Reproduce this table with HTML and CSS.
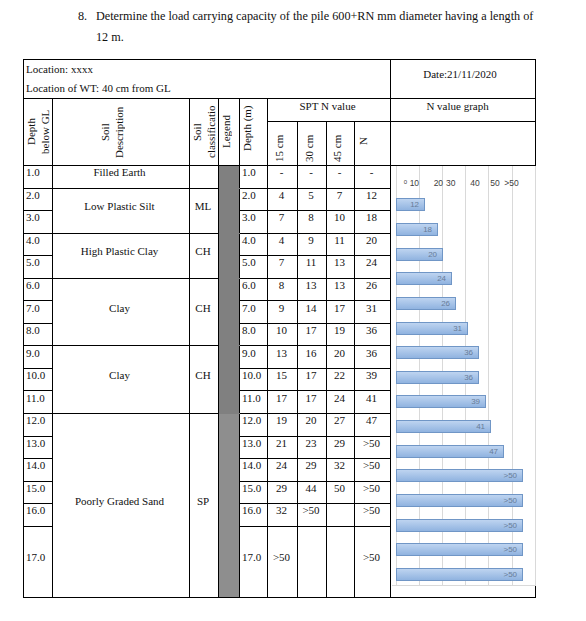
FILE: index.html
```html
<!DOCTYPE html>
<html lang="en">
<head>
    <meta charset="UTF-8">
    <meta name="viewport" content="width=device-width, initial-scale=1.0">
    <title>Pile load capacity - bore log</title>
    <link rel="stylesheet" href="styles.css">
</head>
<body>
    <div class="sheet">
        <div class="question">
            <span class="qnum">8.</span>
            <p>Determine the load carrying capacity of the pile 600+RN mm diameter having a length of 12 m.</p>
        </div>

        <table class="log">
            <colgroup>
                <col class="c-depth">
                <col class="c-desc">
                <col class="c-class">
                <col class="c-legend">
                <col class="c-depthm">
                <col class="c-15">
                <col class="c-30">
                <col class="c-45">
                <col class="c-n">
                <col class="c-graph">
            </colgroup>
            <tr class="row-loc">
                <td colspan="9" class="location">Location: xxxx<br>Location of WT: 40 cm from GL</td>
                <td class="date">Date:21/11/2020</td>
            </tr>
            <tr class="row-head1">
                <th rowspan="2" class="v v-depth"><div class="vert tall">Depth<br>below GL</div></th>
                <th rowspan="2" class="v v-desc"><div class="vert tall">Soil<br>Description</div></th>
                <th rowspan="2" class="v v-class"><div class="vert tall">Soil<br>classificatio</div></th>
                <th rowspan="2" class="v v-legend"><div class="vert tall">Legend</div></th>
                <th rowspan="2" class="v v-depthm"><div class="vert tall">Depth (m)</div></th>
                <th colspan="4" class="spt">SPT N value</th>
                <th class="graph-head">N value graph</th>
            </tr>
            <tr class="row-head2">
                <th class="v v-cm"><div class="vert short">15 cm</div></th>
                <th class="v v-cm"><div class="vert short">30 cm</div></th>
                <th class="v v-cm"><div class="vert short">45 cm</div></th>
                <th class="v v-n"><div class="vert short">N</div></th>
                <th></th>
            </tr>

            <tr>
                <td class="depth">1.0</td>
                <td class="desc">Filled Earth</td>
                <td class="cls"></td>
                <td class="legend"></td>
                <td class="depthm">1.0</td>
                <td class="num">-</td>
                <td class="num">-</td>
                <td class="num">-</td>
                <td class="num">-</td>
                <td rowspan="17" class="graph">
                    <div class="chart">
                        <div class="plot">
                            <div class="axis">
                                <span>0</span><span>10</span><span>20</span><span>30</span><span>40</span><span>50</span><span>&gt;50</span>
                            </div>
                            <div class="bars">
                                <div class="bar-row"><div class="bar" style="width: 29px">12</div></div>
                                <div class="bar-row"><div class="bar" style="width: 42px">18</div></div>
                                <div class="bar-row"><div class="bar" style="width: 47px">20</div></div>
                                <div class="bar-row"><div class="bar" style="width: 56px">24</div></div>
                                <div class="bar-row"><div class="bar" style="width: 60px">26</div></div>
                                <div class="bar-row"><div class="bar" style="width: 72px">31</div></div>
                                <div class="bar-row"><div class="bar" style="width: 83px">36</div></div>
                                <div class="bar-row"><div class="bar" style="width: 83px">36</div></div>
                                <div class="bar-row"><div class="bar" style="width: 90px">39</div></div>
                                <div class="bar-row"><div class="bar" style="width: 95px">41</div></div>
                                <div class="bar-row"><div class="bar" style="width: 108px">47</div></div>
                                <div class="bar-row"><div class="bar" style="width: 127px">&gt;50</div></div>
                                <div class="bar-row"><div class="bar" style="width: 127px">&gt;50</div></div>
                                <div class="bar-row"><div class="bar" style="width: 127px">&gt;50</div></div>
                                <div class="bar-row"><div class="bar" style="width: 127px">&gt;50</div></div>
                                <div class="bar-row"><div class="bar" style="width: 127px">&gt;50</div></div>
                            </div>
                        </div>
                    </div>
                </td>
            </tr>
            <tr>
                <td class="depth">2.0</td>
                <td rowspan="2" class="desc">Low Plastic Silt</td>
                <td rowspan="2" class="cls">ML</td>
                <td rowspan="2" class="legend"></td>
                <td class="depthm">2.0</td>
                <td class="num">4</td>
                <td class="num">5</td>
                <td class="num">7</td>
                <td class="num">12</td>
            </tr>
            <tr>
                <td class="depth">3.0</td>
                <td class="depthm">3.0</td>
                <td class="num">7</td>
                <td class="num">8</td>
                <td class="num">10</td>
                <td class="num">18</td>
            </tr>
            <tr>
                <td class="depth">4.0</td>
                <td rowspan="2" class="desc">High Plastic Clay</td>
                <td rowspan="2" class="cls">CH</td>
                <td rowspan="2" class="legend"></td>
                <td class="depthm">4.0</td>
                <td class="num">4</td>
                <td class="num">9</td>
                <td class="num">11</td>
                <td class="num">20</td>
            </tr>
            <tr>
                <td class="depth">5.0</td>
                <td class="depthm">5.0</td>
                <td class="num">7</td>
                <td class="num">11</td>
                <td class="num">13</td>
                <td class="num">24</td>
            </tr>
            <tr>
                <td class="depth">6.0</td>
                <td rowspan="3" class="desc">Clay</td>
                <td rowspan="3" class="cls">CH</td>
                <td rowspan="3" class="legend"></td>
                <td class="depthm">6.0</td>
                <td class="num">8</td>
                <td class="num">13</td>
                <td class="num">13</td>
                <td class="num">26</td>
            </tr>
            <tr>
                <td class="depth">7.0</td>
                <td class="depthm">7.0</td>
                <td class="num">9</td>
                <td class="num">14</td>
                <td class="num">17</td>
                <td class="num">31</td>
            </tr>
            <tr>
                <td class="depth">8.0</td>
                <td class="depthm">8.0</td>
                <td class="num">10</td>
                <td class="num">17</td>
                <td class="num">19</td>
                <td class="num">36</td>
            </tr>
            <tr>
                <td class="depth">9.0</td>
                <td rowspan="3" class="desc">Clay</td>
                <td rowspan="3" class="cls">CH</td>
                <td rowspan="3" class="legend"></td>
                <td class="depthm">9.0</td>
                <td class="num">13</td>
                <td class="num">16</td>
                <td class="num">20</td>
                <td class="num">36</td>
            </tr>
            <tr>
                <td class="depth">10.0</td>
                <td class="depthm">10.0</td>
                <td class="num">15</td>
                <td class="num">17</td>
                <td class="num">22</td>
                <td class="num">39</td>
            </tr>
            <tr>
                <td class="depth">11.0</td>
                <td class="depthm">11.0</td>
                <td class="num">17</td>
                <td class="num">17</td>
                <td class="num">24</td>
                <td class="num">41</td>
            </tr>
            <tr>
                <td class="depth">12.0</td>
                <td rowspan="6" class="desc">Poorly Graded Sand</td>
                <td rowspan="6" class="cls">SP</td>
                <td rowspan="6" class="legend sand"></td>
                <td class="depthm">12.0</td>
                <td class="num">19</td>
                <td class="num">20</td>
                <td class="num">27</td>
                <td class="num">47</td>
            </tr>
            <tr>
                <td class="depth">13.0</td>
                <td class="depthm">13.0</td>
                <td class="num">21</td>
                <td class="num">23</td>
                <td class="num">29</td>
                <td class="num">&gt;50</td>
            </tr>
            <tr>
                <td class="depth">14.0</td>
                <td class="depthm">14.0</td>
                <td class="num">24</td>
                <td class="num">29</td>
                <td class="num">32</td>
                <td class="num">&gt;50</td>
            </tr>
            <tr>
                <td class="depth">15.0</td>
                <td class="depthm">15.0</td>
                <td class="num">29</td>
                <td class="num">44</td>
                <td class="num">50</td>
                <td class="num">&gt;50</td>
            </tr>
            <tr>
                <td class="depth">16.0</td>
                <td class="depthm">16.0</td>
                <td class="num">32</td>
                <td class="num">&gt;50</td>
                <td class="num"></td>
                <td class="num">&gt;50</td>
            </tr>
            <tr class="row-last">
                <td class="depth">17.0</td>
                <td class="depthm">17.0</td>
                <td class="num">&gt;50</td>
                <td class="num"></td>
                <td class="num"></td>
                <td class="num">&gt;50</td>
            </tr>
        </table>
    </div>
</body>
</html>
```

FILE: styles.css
```css
/* Reset some default styles */
body, p {
    margin: 0;
    padding: 0;
}

body {
    font-family: "Liberation Serif", "Times New Roman", serif;
    color: #111;
    background-color: #fff;
}

.sheet {
    padding: 6px 0 0 23px;
}

/* Question text */
.question {
    display: flex;
    margin-left: 55px;
    margin-bottom: 11px;
    font-size: 12.2px;
    line-height: 21px;
}

.qnum {
    width: 18px;
    flex: none;
}

.question p {
    width: 446px;
}

/* Bore log table */
.log {
    border-collapse: collapse;
    table-layout: fixed;
    width: 512px;
    font-family: "Liberation Serif", "Times New Roman", serif;
    font-size: 11px;
}

.c-depth { width: 29px; }
.c-desc { width: 137px; }
.c-class { width: 29px; }
.c-legend { width: 21px; }
.c-depthm { width: 28px; }
.c-15 { width: 30px; }
.c-30 { width: 29px; }
.c-45 { width: 28px; }
.c-n { width: 36px; }
.c-graph { width: 145px; }

.log td,
.log th {
    border: 1px solid #000;
    padding: 0 3px 8px;
    font-family: "Liberation Serif", "Times New Roman", serif;
    font-weight: normal;
    line-height: 13px;
    vertical-align: middle;
    text-align: center;
}

.log tr {
    height: 22.56px;
}

/* Header rows */
.log .row-loc {
    height: 39px;
}

.log .location {
    text-align: left;
    vertical-align: top;
    line-height: 19px;
    padding: 0 2px;
}

.log .date {
    padding: 0 6px 9px 0;
}

.log .row-head1 {
    height: 23px;
}

.log .row-head2 {
    height: 44px;
}

.log .spt {
    padding-right: 6px;
}

.log .graph-head {
    padding-right: 14px;
}

.log th.v {
    padding: 0;
    line-height: 0;
}

.vert {
    display: inline-block;
    vertical-align: middle;
    writing-mode: vertical-rl;
    transform: rotate(180deg);
    text-align: center;
    line-height: 14px;
}

.vert.tall {
    height: 56px;
}

.vert.short {
    height: 34px;
}

.log th.v-desc { padding-right: 18px; }
.log th.v-legend { padding-right: 6px; }
.log th.v-depthm { padding: 0 16px 8px 0; }
.log th.v-cm { padding: 8px 7px 0 0; }
.log th.v-n { padding: 0 20px 6px 0; }

/* Body cells */
.log .depth,
.log .depthm {
    text-align: left;
    padding-left: 2px;
}

.log .desc {
    padding-right: 6px;
}

.log .cls {
    padding-right: 5px;
}

.log .num {
    padding-right: 5px;
}

.log .legend {
    background-color: #808080;
    border-top-color: #808080;
    border-bottom-color: #808080;
}

.log .legend.sand {
    background-color: #8e8e8e;
    border-bottom-color: #000;
}

.log .row-last {
    height: 71px;
}

/* N value graph */
.log .graph {
    padding: 0;
    vertical-align: top;
}

.chart {
    position: relative;
    box-sizing: border-box;
    height: 420px;
    margin: 0 -1px 0 1px;
    padding-left: 4px;
    background-color: #fff;
    border-right: 1px solid #d9d9d9;
    border-bottom: 1px solid #d9d9d9;
    font-family: "Liberation Sans", Arial, sans-serif;
}

.plot {
    height: 100%;
    background-image: repeating-linear-gradient(to right, #d9d9d9 0, #d9d9d9 1px, transparent 1px, transparent 23.1px);
}

.axis {
    display: flex;
    align-items: flex-start;
    box-sizing: border-box;
    height: 32.3px;
    padding: 12px 0 0 7.6px;
    font-size: 8.5px;
    line-height: 10px;
    color: #404040;
    text-align: left;
}

.axis span:nth-child(1) { width: 6px; font-size: 6px; line-height: 6px; margin-top: 1px; }
.axis span:nth-child(2) { width: 24px; }
.axis span:nth-child(3) { width: 12.4px; }
.axis span:nth-child(4) { width: 24.3px; }
.axis span:nth-child(5) { width: 20px; }
.axis span:nth-child(6) { width: 14px; }

.bar-row {
    height: 24.65px;
}

.bar-row:last-child {
    height: 13px;
}

.bar {
    box-sizing: border-box;
    height: 13px;
    padding-right: 5px;
    border: 1px solid #7096c6;
    background: linear-gradient(#bed4f0, #90b3e0);
    font-size: 8px;
    line-height: 11px;
    color: #687c98;
    text-align: right;
}
```
